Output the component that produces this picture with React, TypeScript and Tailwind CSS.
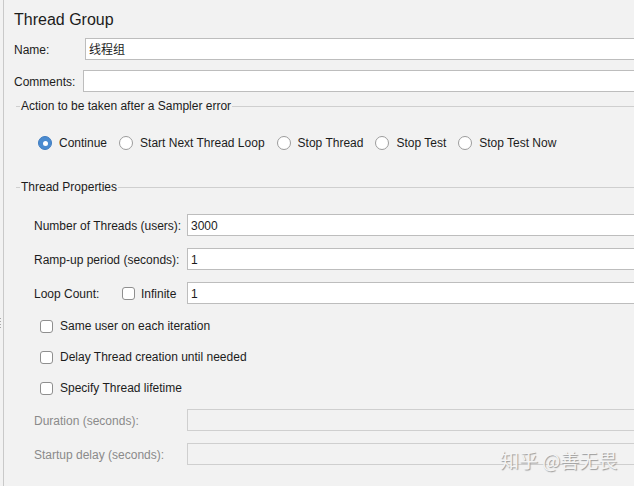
import React from "react";

const font = { fontFamily: '"Liberation Sans", "Noto Sans CJK SC", Arial, sans-serif' };

function Radio({ checked, label }: { checked?: boolean; label: string }) {
  return (
    <div className="flex items-center">
      {checked ? (
        <span className="w-[14px] h-[14px] rounded-full bg-[#4a8bd0] border border-[#3f7cc0] flex items-center justify-center">
          <span className="w-[5px] h-[5px] rounded-full bg-white" />
        </span>
      ) : (
        <span className="w-[14px] h-[14px] rounded-full bg-white border border-[#9c9c9c]" />
      )}
      <span className="ml-[7px] text-[12px] text-[#1c1c1c]">{label}</span>
    </div>
  );
}

function Check() {
  return <span className="w-[13px] h-[13px] rounded-[3px] bg-white border border-[#8f8f8f] shrink-0" />;
}

function Field({ value, disabled }: { value?: string; disabled?: boolean }) {
  return (
    <div
      className={
        "h-[22px] flex-1 border border-r-0 flex items-center pl-[3px] pt-[2px] text-[12px] " +
        (disabled ? "bg-[#f2f2f2] border-[#cfcfcf]" : "bg-white border-[#bdbdbd] text-[#1c1c1c]")
      }
    >
      {value}
    </div>
  );
}

function Legend({ text }: { text: string }) {
  return (
    <div className="flex items-center h-[14px]">
      <span className="w-[4px] h-px bg-[#cfcfcf] ml-[12px]" />
      <span className="px-[1px] text-[12px] text-[#1c1c1c] leading-[14px]">{text}</span>
      <span className="flex-1 h-px bg-[#cfcfcf]" />
    </div>
  );
}

export default function App() {
  return (
    <div className="w-[634px] h-[486px] overflow-hidden relative bg-[#f2f2f2]" style={font}>
      <div className="absolute left-0 top-[318px] flex flex-col gap-[2px]">
        <span className="w-px h-px bg-[#aaa]" />
        <span className="w-px h-px bg-[#aaa]" />
        <span className="w-px h-px bg-[#aaa]" />
        <span className="w-px h-px bg-[#aaa]" />
      </div>
      <div className="ml-[3px] h-full border-l border-[#c9c9c9] flex flex-col">
        <div className="mt-[9px] h-[22px] leading-[22px] pl-[10px] text-[16px] text-[#1c1c1c]">Thread Group</div>

        <div className="mt-[7px] flex items-center">
          <span className="w-[81px] pl-[10px] pt-[2px] text-[12px] text-[#1c1c1c]">Name:</span>
          <Field value="线程组" />
        </div>
        <div className="mt-[10px] flex items-center">
          <span className="w-[79px] pl-[10px] pt-[2px] text-[12px] text-[#1c1c1c]">Comments:</span>
          <Field />
        </div>

        <div className="mt-[7px]">
          <Legend text="Action to be taken after a Sampler error" />
        </div>

        <div className="mt-[22px] h-[16px] flex items-center gap-[12px] pl-[34px]">
          <Radio checked label="Continue" />
          <Radio label="Start Next Thread Loop" />
          <Radio label="Stop Thread" />
          <Radio label="Stop Test" />
          <Radio label="Stop Test Now" />
        </div>

        <div className="mt-[29px]">
          <Legend text="Thread Properties" />
        </div>

        <div className="mt-[20px] flex items-center">
          <span className="w-[183px] pl-[30px] pt-[2px] text-[12px] text-[#1c1c1c]">Number of Threads (users):</span>
          <Field value="3000" />
        </div>
        <div className="mt-[12px] flex items-center">
          <span className="w-[183px] pl-[30px] pt-[2px] text-[12px] text-[#1c1c1c]">Ramp-up period (seconds):</span>
          <Field value="1" />
        </div>
        <div className="mt-[12px] flex items-center">
          <span className="w-[118px] pl-[30px] pt-[2px] text-[12px] text-[#1c1c1c]">Loop Count:</span>
          <Check />
          <span className="ml-[6px] w-[46px] pt-[2px] text-[12px] text-[#1c1c1c]">Infinite</span>
          <Field value="1" />
        </div>

        <div className="mt-[14px] h-[16px] flex items-center pl-[36px]">
          <Check />
          <span className="ml-[7px] text-[12px] text-[#1c1c1c]">Same user on each iteration</span>
        </div>
        <div className="mt-[15px] h-[16px] flex items-center pl-[36px]">
          <Check />
          <span className="ml-[7px] text-[12px] text-[#1c1c1c]">Delay Thread creation until needed</span>
        </div>
        <div className="mt-[15px] h-[16px] flex items-center pl-[36px]">
          <Check />
          <span className="ml-[7px] text-[12px] text-[#1c1c1c]">Specify Thread lifetime</span>
        </div>

        <div className="mt-[13px] flex items-center">
          <span className="w-[183px] pl-[30px] pt-[2px] text-[12px] text-[#8a8a8a]">Duration (seconds):</span>
          <Field disabled />
        </div>
        <div className="mt-[12px] flex items-center">
          <span className="w-[183px] pl-[30px] pt-[2px] text-[12px] text-[#8a8a8a]">Startup delay (seconds):</span>
          <Field disabled />
        </div>
      </div>

      <div
        className="absolute left-[500px] top-[447px] text-[19px] leading-[26px] text-[#f4f4f4]"
        style={{ fontFamily: '"Noto Sans CJK SC", sans-serif', textShadow: "1px 1px 1px #9a9a9a" }}
      >
        知乎 @善无畏
      </div>
    </div>
  );
}
